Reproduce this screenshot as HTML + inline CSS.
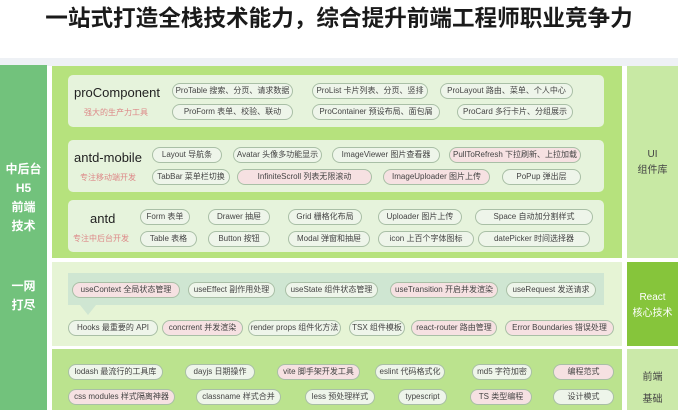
<!DOCTYPE html><html><head><meta charset="utf-8"><style>
*{margin:0;padding:0;box-sizing:border-box}
body{width:678px;height:410px;overflow:hidden;background:#fff;position:relative;font-family:"Liberation Sans","Noto Sans CJK SC",sans-serif}
.a{position:absolute}
.t{position:absolute;left:0;top:4px;width:678px;text-align:center;font-size:22.6px;font-weight:bold;color:#1a1a1a;white-space:nowrap;line-height:30px}
.p{position:absolute;height:16px;border:1px solid #a9bfa6;border-radius:9px;background:#eef5ea;font-size:8px;color:#444;line-height:14px;text-align:center;white-space:nowrap;overflow:hidden}
.k{background:#f6e1e2}
.side{color:#fff;font-size:12px;text-align:center;line-height:19px;font-weight:bold}
.r{position:absolute;text-align:center;font-size:10px;line-height:16px}
</style></head><body>
<div class="t">一站式打造全栈技术能力，综合提升前端工程师职业竞争力</div>
<div class="a" style="left:0;top:58px;width:678px;height:8px;background:#eef1f5"></div>
<div class="a" style="left:0;top:65px;width:47px;height:345px;background:#72c27c"></div>
<div class="a side" style="left:0;top:160px;width:47px">中后台<br>H5<br>前端<br>技术</div>
<div class="a side" style="left:0;top:277px;width:47px">一网<br>打尽</div>
<div class="a" style="left:52px;top:66px;width:570px;height:192px;background:#b6e27d"></div>
<div class="a" style="left:52px;top:262px;width:570px;height:84px;background:#e6f4d5"></div>
<div class="a" style="left:52px;top:349px;width:570px;height:61px;background:#bbe38e"></div>
<div class="a" style="left:627px;top:66px;width:51px;height:192px;background:#c8e9a4"></div>
<div class="a" style="left:627px;top:262px;width:51px;height:84px;background:#86c53b"></div>
<div class="a" style="left:627px;top:349px;width:51px;height:61px;background:#cbe9a9"></div>
<div class="r" style="left:627px;top:147px;width:51px;color:#444">UI<br>组件库</div>
<div class="r" style="left:627px;top:290px;width:51px;color:#fff">React<br>核心技术</div>
<div class="r" style="left:627px;top:367px;width:51px;color:#444;line-height:22px">前端<br>基础</div>
<div class="a" style="left:68px;top:75px;width:536px;height:52px;background:#e6f3dc;border-radius:5px"></div>
<div class="a" style="left:68px;top:140px;width:536px;height:52px;background:#e6f3dc;border-radius:5px"></div>
<div class="a" style="left:68px;top:200px;width:536px;height:52px;background:#e6f3dc;border-radius:5px"></div>
<div class="a" style="left:68px;top:273px;width:536px;height:32px;background:#cfe6d2"></div>
<div class="a" style="left:80px;top:305px;width:0;height:0;border-left:8px solid transparent;border-right:8px solid transparent;border-top:10px solid #cfe6d2"></div>
<div class="a" style="left:74px;top:85px;font-size:13px;color:#222">proComponent</div>
<div class="a" style="left:84px;top:107px;font-size:8px;color:#d88">强大的生产力工具</div>
<div class="a" style="left:74px;top:150px;font-size:13px;color:#222">antd-mobile</div>
<div class="a" style="left:80px;top:172px;font-size:8px;color:#d88">专注移动端开发</div>
<div class="a" style="left:90px;top:211px;font-size:13px;color:#222">antd</div>
<div class="a" style="left:73px;top:233px;font-size:8px;color:#d88">专注中后台开发</div>
<div class="p" style="left:172px;top:83px;width:121px">ProTable 搜索、分页、请求数据</div>
<div class="p" style="left:312px;top:83px;width:116px">ProList 卡片列表、分页、竖排</div>
<div class="p" style="left:440px;top:83px;width:133px">ProLayout 路由、菜单、个人中心</div>
<div class="p" style="left:172px;top:104px;width:121px">ProForm 表单、校验、联动</div>
<div class="p" style="left:312px;top:104px;width:128px">ProContainer 预设布局、面包屑</div>
<div class="p" style="left:457px;top:104px;width:116px">ProCard 多行卡片、分组展示</div>
<div class="p" style="left:152px;top:147px;width:70px">Layout 导航条</div>
<div class="p" style="left:233px;top:147px;width:89px">Avatar 头像多功能显示</div>
<div class="p" style="left:332px;top:147px;width:108px">ImageViewer 图片查看器</div>
<div class="p k" style="left:449px;top:147px;width:132px">PullToRefresh 下拉刷新、上拉加载</div>
<div class="p" style="left:152px;top:169px;width:78px">TabBar 菜单栏切换</div>
<div class="p k" style="left:237px;top:169px;width:135px">InfiniteScroll 列表无限滚动</div>
<div class="p k" style="left:383px;top:169px;width:107px">ImageUploader 图片上传</div>
<div class="p" style="left:502px;top:169px;width:79px">PoPup 弹出层</div>
<div class="p" style="left:140px;top:209px;width:50px">Form 表单</div>
<div class="p" style="left:208px;top:209px;width:62px">Drawer 抽屉</div>
<div class="p" style="left:288px;top:209px;width:74px">Grid 栅格化布局</div>
<div class="p" style="left:378px;top:209px;width:84px">Uploader 图片上传</div>
<div class="p" style="left:475px;top:209px;width:118px">Space 自动加分割样式</div>
<div class="p" style="left:140px;top:231px;width:57px">Table 表格</div>
<div class="p" style="left:208px;top:231px;width:62px">Button 按钮</div>
<div class="p" style="left:288px;top:231px;width:82px">Modal 弹窗和抽屉</div>
<div class="p" style="left:378px;top:231px;width:96px">icon 上百个字体图标</div>
<div class="p" style="left:478px;top:231px;width:112px">datePicker 时间选择器</div>
<div class="p k" style="left:72px;top:282px;width:108px">useContext 全局状态管理</div>
<div class="p" style="left:188px;top:282px;width:87px">useEffect 副作用处理</div>
<div class="p" style="left:285px;top:282px;width:93px">useState 组件状态管理</div>
<div class="p k" style="left:390px;top:282px;width:108px">useTransition 开启并发渲染</div>
<div class="p" style="left:506px;top:282px;width:90px">useRequest 发送请求</div>
<div class="p" style="left:68px;top:320px;width:90px">Hooks 最重要的 API</div>
<div class="p k" style="left:162px;top:320px;width:81px">concrrent 并发渲染</div>
<div class="p" style="left:248px;top:320px;width:93px">render props 组件化方法</div>
<div class="p" style="left:349px;top:320px;width:56px">TSX 组件模板</div>
<div class="p k" style="left:411px;top:320px;width:86px">react-router 路由管理</div>
<div class="p k" style="left:505px;top:320px;width:109px">Error Boundaries 错误处理</div>
<div class="p" style="left:68px;top:364px;width:95px">lodash 最流行的工具库</div>
<div class="p" style="left:185px;top:364px;width:70px">dayjs 日期操作</div>
<div class="p k" style="left:277px;top:364px;width:83px">vite 脚手架开发工具</div>
<div class="p" style="left:375px;top:364px;width:70px">eslint 代码格式化</div>
<div class="p" style="left:472px;top:364px;width:60px">md5 字符加密</div>
<div class="p k" style="left:553px;top:364px;width:61px">编程范式</div>
<div class="p k" style="left:68px;top:389px;width:107px">css modules 样式隔离神器</div>
<div class="p" style="left:196px;top:389px;width:85px">classname 样式合并</div>
<div class="p" style="left:305px;top:389px;width:70px">less 预处理样式</div>
<div class="p" style="left:398px;top:389px;width:49px">typescript</div>
<div class="p k" style="left:470px;top:389px;width:62px">TS 类型编程</div>
<div class="p" style="left:553px;top:389px;width:61px">设计模式</div>
</body></html>
